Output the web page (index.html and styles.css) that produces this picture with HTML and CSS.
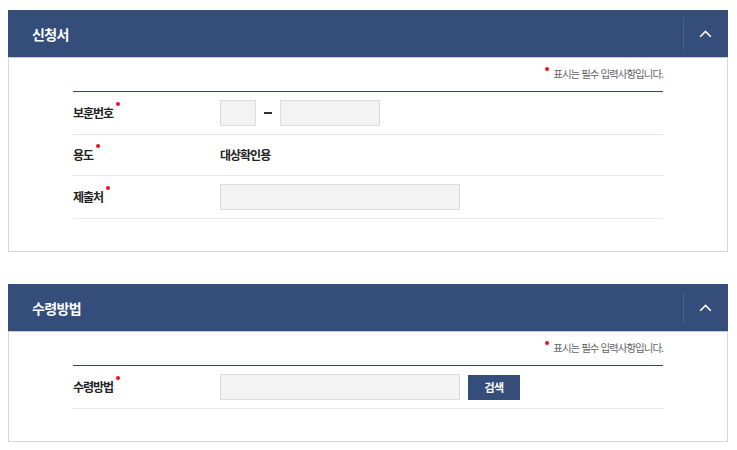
FILE: index.html
```html
<!DOCTYPE html>
<html lang="ko">
<head>
<meta charset="utf-8">
<title>신청서</title>
<link rel="stylesheet" href="styles.css">
</head>
<body>
<section class="panel">
  <div class="panel-head">
    <h2 class="panel-title">신청서</h2>
    <button class="toggle" type="button" aria-label="접기">
      <svg width="13" height="8" viewBox="0 0 13 8"><polyline points="1.2,6.8 6.5,1.5 11.8,6.8" fill="none" stroke="#fff" stroke-width="1.6"/></svg>
    </button>
  </div>
  <div class="panel-body">
    <p class="req-note"><span class="note-dot"></span>표시는 필수 입력사항입니다.</p>
    <div class="form-table">
      <div class="row">
        <div class="label"><span class="req">보훈번호</span></div>
        <div class="field">
          <input class="inp inp-xs" type="text">
          <span class="dash"></span>
          <input class="inp inp-md" type="text">
        </div>
      </div>
      <div class="row row-text">
        <div class="label"><span class="req">용도</span></div>
        <div class="field"><span class="value">대상확인용</span></div>
      </div>
      <div class="row">
        <div class="label"><span class="req">제출처</span></div>
        <div class="field"><input class="inp inp-lg" type="text"></div>
      </div>
    </div>
  </div>
</section>

<section class="panel">
  <div class="panel-head">
    <h2 class="panel-title">수령방법</h2>
    <button class="toggle" type="button" aria-label="접기">
      <svg width="13" height="8" viewBox="0 0 13 8"><polyline points="1.2,6.8 6.5,1.5 11.8,6.8" fill="none" stroke="#fff" stroke-width="1.6"/></svg>
    </button>
  </div>
  <div class="panel-body">
    <p class="req-note"><span class="note-dot"></span>표시는 필수 입력사항입니다.</p>
    <div class="form-table">
      <div class="row">
        <div class="label"><span class="req">수령방법</span></div>
        <div class="field">
          <input class="inp inp-lg" type="text">
          <button class="btn-search" type="button">검색</button>
        </div>
      </div>
    </div>
  </div>
</section>
</body>
</html>
```

FILE: styles.css
```css
* { box-sizing: border-box; }

body {
  margin: 10px 9px 0 8px;
  background: #fff;
  font-family: "Noto Sans CJK KR", "Noto Sans", sans-serif;
  color: #222;
}

.panel + .panel { margin-top: 32px; }

.panel-head {
  display: flex;
  align-items: center;
  height: 47px;
  background: #344d7a;
  padding-left: 24px;
}

.panel-title {
  flex: 1;
  margin: 0;
  font-size: 14px;
  font-weight: 700;
  letter-spacing: -0.6px;
  color: #fff;
  line-height: 20px;
}

.toggle {
  display: flex;
  align-items: center;
  justify-content: center;
  width: 45px;
  height: 32px;
  padding: 0 2px 0 0;
  margin: 0;
  border: 0;
  border-left: 1px solid #4a6291;
  background: transparent;
}

.panel-body {
  border: 1px solid #d6d6d6;
  border-top-color: #c9c9c9;
  padding: 7px 64px 32px;
}

.req-note {
  display: flex;
  justify-content: flex-end;
  align-items: center;
  margin: 0 0 10px;
  height: 16px;
  font-size: 10.5px;
  letter-spacing: -1px;
  color: #666;
}

.note-dot {
  width: 4px;
  height: 4px;
  border-radius: 50%;
  background: #e8141b;
  margin-right: 4px;
  transform: translateY(-4px);
}

.form-table {
  border-top: 1px solid #34466e;
}

.row {
  display: flex;
  align-items: center;
  padding: 8px 0;
  border-bottom: 1px solid #e8e8e8;
}

.row-text { padding: 12px 0; }

.label {
  width: 147px;
  flex: none;
  font-size: 12px;
  font-weight: 700;
  letter-spacing: -1px;
  line-height: 16px;
  color: #222;
}

.req::after {
  content: "";
  display: inline-block;
  width: 4px;
  height: 4px;
  border-radius: 50%;
  background: #e8141b;
  margin-left: 3px;
  vertical-align: top;
  transform: translateY(-3px);
}

.field {
  display: flex;
  align-items: center;
  min-height: 16px;
}

.value {
  font-size: 12px;
  font-weight: 700;
  letter-spacing: -1px;
  line-height: 16px;
  color: #222;
}

.inp {
  height: 26px;
  margin: 0;
  padding: 0 6px;
  border: 1px solid #dcdcdc;
  background: #f3f3f3;
  font: inherit;
}

.inp-xs { width: 36px; }
.inp-md { width: 100px; }
.inp-lg { width: 240px; }

.dash {
  width: 8px;
  height: 2px;
  background: #333;
  margin: 0 8px;
}

.btn-search {
  width: 52px;
  height: 25px;
  margin: 0 0 0 8px;
  padding: 0;
  border: 0;
  background: #344d7a;
  color: #fff;
  font-family: inherit;
  font-size: 11px;
  font-weight: 700;
  letter-spacing: -0.5px;
}
```
